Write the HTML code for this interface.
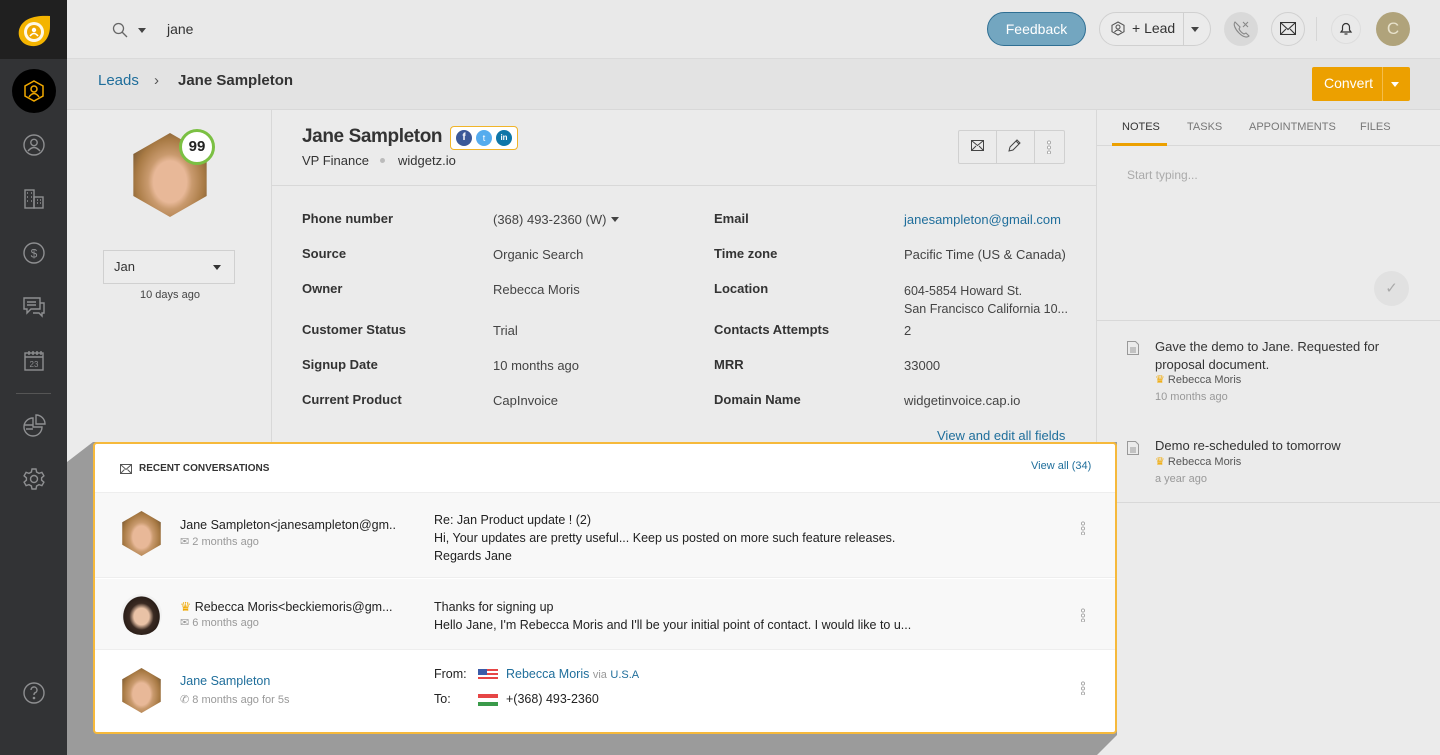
<!DOCTYPE html>
<html><head><meta charset="utf-8"><style>
*{box-sizing:border-box;margin:0;padding:0}
body{width:1440px;height:755px;overflow:hidden;background:#ebebeb;font-family:"Liberation Sans",sans-serif;color:#333;font-size:13px;position:relative}
.abs{position:absolute}
.sb{left:0;top:0;width:67px;height:755px;background:#323335}
.ico{position:absolute;left:22px;width:24px;height:24px}
.top{left:67px;top:0;width:1373px;height:59px;background:#e9e9e9;border-bottom:1px solid #dadada}
.bc{left:67px;top:59px;width:1373px;height:51px;background:#e3e3e3;border-bottom:1px solid #d8d8d8}
.lbl{font-weight:bold;color:#333;font-size:13px}
.val{font-size:13px;color:#444}
.hex{clip-path:polygon(50% 0,97% 25%,97% 75%,50% 100%,3% 75%,3% 25%)}
.face{background:radial-gradient(ellipse at 50% 58%,#e8b898 0 30%,#c99a6e 40%,#a87a44 62%,#7a5a34 80%)}
.face2{background:radial-gradient(ellipse at 50% 55%,#e9c2a6 0 26%,#3a2a22 42%,#2a1e18 62%,#f2f2f2 64%)}
.dots{position:absolute;width:4px;height:14px;background:radial-gradient(circle,#fff 0 1px,#aaa 1.2px 2px,transparent 2.2px) 0 0/4px 5px repeat-y}
.cv{font-size:12.5px}
</style></head><body>

<div class="abs sb"></div>
<div class="abs" style="left:0;top:0;width:67px;height:59px;background:#202020"></div>
<svg class="abs" style="left:16px;top:14px" width="36" height="34" viewBox="0 0 36 34"><path d="M34 2 C20 1 6 4 3 16 C1 26 9 33 19 32 C29 31 34 22 34 12Z" fill="#f4b400"/><circle cx="18" cy="18" r="10" fill="#fff" opacity=".9"/><circle cx="18" cy="18" r="7" fill="#f0a800"/><circle cx="18" cy="16" r="2.2" fill="#fff"/><path d="M14 22 q4-5 8 0" stroke="#fff" stroke-width="1.6" fill="none"/></svg>
<div class="abs" style="left:12px;top:69px;width:44px;height:44px;border-radius:50%;background:#000"></div>
<svg class="abs" style="left:22px;top:79px" width="24" height="24" viewBox="0 0 24 24" fill="none" stroke="#f0a800" stroke-width="1.5"><path d="M12 2 L21 7 V17 L12 22 L3 17 V7Z"/><circle cx="12" cy="10" r="3"/><path d="M7 18 q5-7 10 0"/></svg>
<svg class="ico" style="top:133px" viewBox="0 0 24 24" fill="none" stroke="#8e8f91" stroke-width="1.4"><circle cx="12" cy="12" r="10"/><circle cx="12" cy="9.5" r="3.2"/><path d="M6 18 q6-7 12 0"/></svg>
<svg class="ico" style="top:187px" viewBox="0 0 24 24" fill="none" stroke="#8e8f91" stroke-width="1.4"><rect x="3" y="3" width="9" height="18"/><rect x="12" y="10" width="9" height="11"/><path d="M5 6h1M9 6h1M5 10h1M9 10h1M5 14h1M9 14h1M15 13h1M18 13h1M15 16h1M18 16h1"/></svg>
<svg class="ico" style="top:241px" viewBox="0 0 24 24" fill="none" stroke="#8e8f91" stroke-width="1.4"><circle cx="12" cy="12" r="10"/><text x="12" y="16.5" font-size="12" text-anchor="middle" fill="#8e8f91" stroke="none" font-family="Liberation Sans">$</text></svg>
<svg class="ico" style="top:295px" viewBox="0 0 24 24" fill="none" stroke="#8e8f91" stroke-width="1.4"><path d="M2 3h16v11H9l-4 4v-4H2z"/><path d="M18 8h4v10h-2v3l-3-3h-6"/><path d="M5 7h9M5 10h9"/></svg>
<svg class="ico" style="top:349px" viewBox="0 0 24 24" fill="none" stroke="#8e8f91" stroke-width="1.4"><rect x="3" y="4" width="18" height="17"/><path d="M3 8h18M7 2v4M11 2v4M15 2v4M19 2v4"/><text x="12" y="18" font-size="8" text-anchor="middle" fill="#8e8f91" stroke="none" font-family="Liberation Sans">23</text></svg>
<div class="abs" style="left:16px;top:393px;width:35px;height:1px;background:#555"></div>
<svg class="ico" style="top:413px" viewBox="0 0 24 24" fill="none" stroke="#8e8f91" stroke-width="1.4"><path d="M11 5a9 9 0 1 0 9 9h-9z"/><path d="M14 2v9h9a9 9 0 0 0-9-9z"/><path d="M2 12h9M4 16h7"/></svg>
<svg class="ico" style="top:467px" viewBox="0 0 24 24" fill="none" stroke="#8e8f91" stroke-width="1.4"><circle cx="12" cy="12" r="3.5"/><path d="M10 2h4l.6 3 2.4 1.4 2.9-1 2 3.4-2.3 2v2.4l2.3 2-2 3.4-2.9-1L14.6 19 14 22h-4l-.6-3L7 17.6l-2.9 1-2-3.4 2.3-2v-2.4l-2.3-2 2-3.4 2.9 1L9.4 5z"/></svg>
<svg class="ico" style="top:681px" viewBox="0 0 24 24" fill="none" stroke="#8e8f91" stroke-width="1.4"><circle cx="12" cy="12" r="10"/><path d="M9 9a3 3 0 1 1 4 2.8c-1 .4-1 1-1 2.2"/><circle cx="12" cy="17" r=".6" fill="#8e8f91"/></svg>

<div class="abs top"></div>
<svg class="abs" style="left:112px;top:22px" width="16" height="16" viewBox="0 0 16 16" fill="none" stroke="#666" stroke-width="1.3"><circle cx="6.5" cy="6.5" r="5"/><path d="M10 10l5 5"/></svg>
<div class="abs" style="left:138px;top:28px;border:4px solid transparent;border-top:5px solid #444"></div>
<div class="abs" style="left:167px;top:21px;font-size:14px;color:#333">jane</div>
<div class="abs" style="left:987px;top:12px;width:99px;height:34px;border-radius:17px;background:#73a6c0;border:1px solid #2f6f93;color:#fff;font-size:14px;text-align:center;line-height:32px">Feedback</div>
<div class="abs" style="left:1099px;top:12px;width:112px;height:34px;border-radius:17px;border:1px solid #d0d0d0;background:#ebebeb"></div>
<div class="abs" style="left:1183px;top:13px;width:1px;height:32px;background:#d0d0d0"></div>
<svg class="abs" style="left:1111px;top:21px" width="14" height="15" viewBox="0 0 14 15" fill="none" stroke="#555" stroke-width="1.1"><path d="M7 1l6 3.3v6.4L7 14 1 10.7V4.3z"/><circle cx="7" cy="6" r="2"/><path d="M3.5 11q3.5-4 7 0"/></svg>
<div class="abs" style="left:1132px;top:20px;font-size:14px;color:#333">+ Lead</div>
<div class="abs" style="left:1191px;top:27px;border:4px solid transparent;border-top:5px solid #444"></div>
<div class="abs" style="left:1224px;top:12px;width:34px;height:34px;border-radius:50%;background:#d9d9d9"></div>
<svg class="abs" style="left:1232px;top:20px" width="18" height="18" viewBox="0 0 18 18" fill="none" stroke="#888" stroke-width="1.1"><path d="M3 2c-2 2 0 7 4 11s8 5 10 3l-3-3-2 1c-2-1-4-3-5-5l1-2z"/><path d="M11 2l5 5M16 2l-5 5"/></svg>
<div class="abs" style="left:1271px;top:12px;width:34px;height:34px;border-radius:50%;border:1px solid #d0d0d0"></div>
<svg class="abs" style="left:1280px;top:22px" width="16" height="13" viewBox="0 0 16 13" fill="none" stroke="#333" stroke-width="1.1"><rect x=".5" y=".5" width="15" height="12"/><path d="M.5 .5l7.5 7 7.5-7M.5 12.5l5.5-5.5M15.5 12.5L10 7"/></svg>
<div class="abs" style="left:1316px;top:17px;width:1px;height:24px;background:#d6d6d6"></div>
<div class="abs" style="left:1331px;top:14px;width:30px;height:30px;border-radius:50%;border:1px solid #ddd"></div>
<svg class="abs" style="left:1339px;top:21px" width="14" height="15" viewBox="0 0 14 15" fill="none" stroke="#333" stroke-width="1.2"><path d="M2 11h10l-1.5-2V6a3.5 3.5 0 0 0-7 0v3z"/><path d="M5.5 13h3"/></svg>
<div class="abs" style="left:1376px;top:12px;width:34px;height:34px;border-radius:50%;background:#b0a37b;color:#e8e2cc;font-size:17px;text-align:center;line-height:34px">C</div>

<div class="abs bc"></div>
<div class="abs" style="left:98px;top:72px;font-size:15px;color:#1f6e9b">Leads</div>
<div class="abs" style="left:154px;top:72px;font-size:15px;color:#555">›</div>
<div class="abs" style="left:178px;top:72px;font-size:15px;font-weight:bold;color:#333">Jane Sampleton</div>
<div class="abs" style="left:1312px;top:67px;width:98px;height:34px;background:#eca000;border-radius:2px"></div>
<div class="abs" style="left:1382px;top:67px;width:1px;height:34px;background:#f5bd4a"></div>
<div class="abs" style="left:1324px;top:75px;font-size:14px;color:#fff">Convert</div>
<div class="abs" style="left:1391px;top:82px;border:4px solid transparent;border-top:5px solid #fff"></div>

<div class="abs" style="left:271px;top:110px;width:1px;height:645px;background:#d8d8d8"></div>
<div class="abs hex face" style="left:131px;top:133px;width:78px;height:84px;border-radius:10px"></div>
<div class="abs" style="left:179px;top:129px;width:36px;height:36px;border-radius:50%;background:#fff;border:3px solid #7bc043;text-align:center;line-height:30px;font-weight:bold;font-size:15px;color:#222">99</div>
<div class="abs" style="left:103px;top:250px;width:132px;height:34px;border:1px solid #d0d0d0;background:#ececec"></div>
<div class="abs" style="left:114px;top:259px;font-size:13px">Jan</div>
<div class="abs" style="left:213px;top:265px;border:4px solid transparent;border-top:5px solid #333"></div>
<div class="abs" style="left:140px;top:289px;font-size:11px;color:#444">10 days ago</div>

<div class="abs" style="left:272px;top:185px;width:824px;height:1px;background:#d8d8d8"></div>
<div class="abs" style="left:302px;top:126px;font-size:19px;font-weight:bold;color:#333;letter-spacing:-0.4px">Jane Sampleton</div>
<div class="abs" style="left:450px;top:126px;width:68px;height:24px;border:1.5px solid #f0b429;border-radius:4px;background:#fff"></div>
<div class="abs" style="left:456px;top:130px;width:16px;height:16px;border-radius:50%;background:#3b5998;color:#fff;font-size:10px;font-weight:bold;text-align:center;line-height:16px">f</div>
<div class="abs" style="left:476px;top:130px;width:16px;height:16px;border-radius:50%;background:#55acee;color:#fff;font-size:9px;text-align:center;line-height:16px">t</div>
<div class="abs" style="left:496px;top:130px;width:16px;height:16px;border-radius:50%;background:#0e76a8;color:#fff;font-size:8px;font-weight:bold;text-align:center;line-height:16px">in</div>
<div class="abs" style="left:302px;top:153px;font-size:13px">VP Finance</div>
<div class="abs" style="left:380px;top:158px;width:5px;height:5px;border-radius:50%;background:#bbb"></div>
<div class="abs" style="left:398px;top:153px;font-size:13px">widgetz.io</div>
<div class="abs" style="left:958px;top:130px;width:107px;height:34px;border:1px solid #d0d0d0;border-radius:2px"></div>
<div class="abs" style="left:996px;top:130px;width:1px;height:34px;background:#d0d0d0"></div>
<div class="abs" style="left:1034px;top:130px;width:1px;height:34px;background:#d0d0d0"></div>
<svg class="abs" style="left:971px;top:140px" width="13" height="11" viewBox="0 0 13 11" fill="none" stroke="#444"><rect x=".5" y=".5" width="12" height="10"/><path d="M.5 .5l6 5 6-5M.5 10.5l4.5-4.5M12.5 10.5L8 6"/></svg>
<svg class="abs" style="left:1008px;top:139px" width="13" height="13" viewBox="0 0 13 13" fill="none" stroke="#444"><path d="M1 12l1-4 7-7 3 3-7 7z M8 2l3 3"/></svg>
<div class="dots" style="left:1047px;top:140px"></div>

<div class="abs lbl" style="left:302px;top:211px">Phone number</div>
<div class="abs val" style="left:493px;top:212px">(368) 493-2360 (W)</div>
<div class="abs" style="left:611px;top:217px;border:4px solid transparent;border-top:5px solid #444"></div>
<div class="abs lbl" style="left:302px;top:246px">Source</div><div class="abs val" style="left:493px;top:247px">Organic Search</div>
<div class="abs lbl" style="left:302px;top:281px">Owner</div><div class="abs val" style="left:493px;top:282px">Rebecca Moris</div>
<div class="abs lbl" style="left:302px;top:322px">Customer Status</div><div class="abs val" style="left:493px;top:323px">Trial</div>
<div class="abs lbl" style="left:302px;top:357px">Signup Date</div><div class="abs val" style="left:493px;top:358px">10 months ago</div>
<div class="abs lbl" style="left:302px;top:392px">Current Product</div><div class="abs val" style="left:493px;top:393px">CapInvoice</div>
<div class="abs lbl" style="left:714px;top:211px">Email</div><div class="abs val" style="left:904px;top:212px;color:#1f6e9b">janesampleton@gmail.com</div>
<div class="abs lbl" style="left:714px;top:246px">Time zone</div><div class="abs val" style="left:904px;top:247px">Pacific Time (US &amp; Canada)</div>
<div class="abs lbl" style="left:714px;top:281px">Location</div><div class="abs val" style="left:904px;top:282px;line-height:18px;font-size:12.5px">604-5854 Howard St.<br>San Francisco California 10...</div>
<div class="abs lbl" style="left:714px;top:322px">Contacts Attempts</div><div class="abs val" style="left:904px;top:323px">2</div>
<div class="abs lbl" style="left:714px;top:357px">MRR</div><div class="abs val" style="left:904px;top:358px">33000</div>
<div class="abs lbl" style="left:714px;top:392px">Domain Name</div><div class="abs val" style="left:904px;top:393px">widgetinvoice.cap.io</div>
<div class="abs" style="left:937px;top:428px;color:#1f6e9b;font-size:13px">View and edit all fields</div>

<div class="abs" style="left:1096px;top:110px;width:1px;height:645px;background:#d8d8d8"></div>
<div class="abs" style="left:1097px;top:145px;width:343px;height:1px;background:#d8d8d8"></div>
<div class="abs" style="left:1112px;top:143px;width:55px;height:3px;background:#eca000"></div>
<div class="abs" style="left:1122px;top:121px;font-size:11px;color:#333">NOTES</div>
<div class="abs" style="left:1187px;top:121px;font-size:11px;color:#777">TASKS</div>
<div class="abs" style="left:1249px;top:121px;font-size:11px;color:#777">APPOINTMENTS</div>
<div class="abs" style="left:1360px;top:121px;font-size:11px;color:#777">FILES</div>
<div class="abs" style="left:1127px;top:168px;font-size:12px;color:#aaa">Start typing...</div>
<div class="abs" style="left:1374px;top:271px;width:35px;height:35px;border-radius:50%;background:#e1e1e1;color:#aaa;text-align:center;line-height:35px;font-size:15px">✓</div>
<div class="abs" style="left:1097px;top:320px;width:343px;height:1px;background:#d8d8d8"></div>
<div class="abs" style="left:1097px;top:502px;width:343px;height:1px;background:#d8d8d8"></div>
<svg class="abs" style="left:1127px;top:341px" width="12" height="14" viewBox="0 0 12 14" fill="none" stroke="#999"><path d="M.5 .5h8l3 3v10h-11z M3 7h6M3 9h6M3 11h6"/></svg>
<svg class="abs" style="left:1127px;top:441px" width="12" height="14" viewBox="0 0 12 14" fill="none" stroke="#999"><path d="M.5 .5h8l3 3v10h-11z M3 7h6M3 9h6M3 11h6"/></svg>
<div class="abs" style="left:1155px;top:338px;font-size:13px;line-height:18px;width:260px">Gave the demo to Jane. Requested for proposal document.</div>
<div class="abs" style="left:1155px;top:373px;font-size:11px;color:#555"><span style="color:#f0a800">♛</span> Rebecca Moris</div>
<div class="abs" style="left:1155px;top:391px;font-size:11px;color:#999">10 months ago</div>
<div class="abs" style="left:1155px;top:438px;font-size:13px">Demo re-scheduled to tomorrow</div>
<div class="abs" style="left:1155px;top:455px;font-size:11px;color:#555"><span style="color:#f0a800">♛</span> Rebecca Moris</div>
<div class="abs" style="left:1155px;top:473px;font-size:11px;color:#999">a year ago</div>

<div class="abs" style="left:67px;top:440px;width:1060px;height:315px;background:#9b9b9b;clip-path:polygon(26px 2px,0 22px,0 315px,1030px 315px,1050px 295px,1050px 2px)"></div>

<div class="abs" style="left:93px;top:442px;width:1024px;height:292px;background:#fff;border:2px solid #f6b93b;border-radius:4px;overflow:hidden">
 <svg class="abs" style="left:25px;top:20px" width="12" height="10" viewBox="0 0 12 10" fill="none" stroke="#555"><rect x=".5" y=".5" width="11" height="9"/><path d="M.5 .5l5.5 5 5.5-5M.5 9.5l4-4M11.5 9.5l-4-4"/></svg>
 <div class="abs" style="left:44px;top:19px;font-size:10px;font-weight:bold;color:#333">RECENT CONVERSATIONS</div>
 <div class="abs" style="left:936px;top:16px;font-size:11px;color:#1f6e9b">View all (34)</div>
 <div class="abs" style="left:0;top:48px;width:1022px;height:86px;background:#f8f8f8;border-top:1px solid #eee;border-bottom:1px solid #eee"></div>
 <div class="abs" style="left:0;top:135px;width:1022px;height:71px;background:#f8f8f8;border-bottom:1px solid #eee"></div>
 <div class="abs hex face" style="left:26px;top:67px;width:41px;height:45px"></div>
 <div class="abs cv" style="left:85px;top:74px;color:#222">Jane Sampleton&lt;janesampleton@gm..</div>
 <div class="abs" style="left:85px;top:91px;font-size:11px;color:#999">✉ 2 months ago</div>
 <div class="abs cv" style="left:339px;top:67px;color:#222;line-height:18px">Re: Jan Product update ! (2)<br>Hi, Your updates are pretty useful... Keep us posted on more such feature releases.<br>Regards Jane</div>
 <div class="dots" style="left:986px;top:77px"></div>
 <div class="abs face2" style="left:26px;top:150px;width:41px;height:41px;border-radius:50%"></div>
 <div class="abs cv" style="left:85px;top:155px;color:#222"><span style="color:#f0a800">♛</span> Rebecca Moris&lt;beckiemoris@gm...</div>
 <div class="abs" style="left:85px;top:172px;font-size:11px;color:#999">✉ 6 months ago</div>
 <div class="abs cv" style="left:339px;top:154px;color:#222;line-height:18px">Thanks for signing up<br>Hello Jane, I'm Rebecca Moris and I'll be your initial point of contact. I would like to u...</div>
 <div class="dots" style="left:986px;top:164px"></div>
 <div class="abs hex face" style="left:26px;top:224px;width:41px;height:45px"></div>
 <div class="abs cv" style="left:85px;top:230px;color:#1f6e9b">Jane Sampleton</div>
 <div class="abs" style="left:85px;top:249px;font-size:11px;color:#999">✆ 8 months ago for 5s</div>
 <div class="abs cv" style="left:339px;top:223px;color:#222">From:</div>
 <div class="abs cv" style="left:339px;top:248px;color:#222">To:</div>
 <div class="abs" style="left:383px;top:225px;width:20px;height:12px;background:repeating-linear-gradient(#e64545 0 2px,#fff 2px 4px)"><div style="width:9px;height:6px;background:#3b5ba8"></div></div>
 <div class="abs" style="left:383px;top:250px;width:20px;height:12px;background:linear-gradient(#e64545 0 33%,#fff 33% 66%,#3a9a4a 66%)"></div>
 <div class="abs cv" style="left:411px;top:223px;color:#1f6e9b">Rebecca Moris <span style="font-size:11px;color:#999">via</span> <span style="font-size:11px">U.S.A</span></div>
 <div class="abs cv" style="left:411px;top:248px;color:#222">+(368) 493-2360</div>
 <div class="dots" style="left:986px;top:237px"></div>
</div>
</body></html>
